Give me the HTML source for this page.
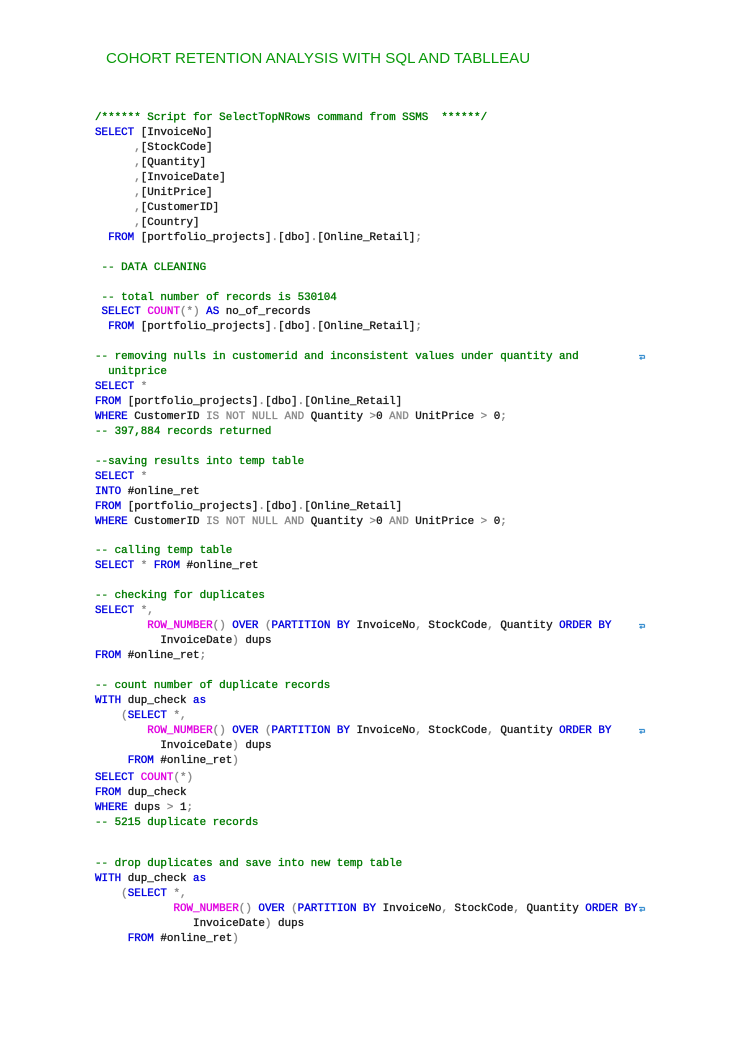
<!DOCTYPE html>
<html><head><meta charset="utf-8">
<style>
html,body{margin:0;padding:0;background:#fff;width:740px;height:1047px;overflow:hidden;position:relative}
.t{position:absolute;left:106px;top:50px;font-family:"Liberation Sans",Arial,sans-serif;font-size:15.1px;color:#0a9a0a;white-space:pre;letter-spacing:0}
#code{position:absolute;left:0;top:1px;width:740px;height:1000px}
.l{position:absolute;left:95px;height:15px;line-height:15px;font-family:"Liberation Mono","DejaVu Sans Mono",monospace;font-size:10.9px;color:#1a1a1a;white-space:pre;-webkit-text-stroke:0.35px}
.k{color:#0000e0}.c{color:#007a00}.g{color:#8a8a8a}.m{color:#e000e0}
.w{position:absolute;width:8px;height:7px}
</style></head><body>
<div class="t">COHORT RETENTION ANALYSIS WITH SQL AND TABLLEAU</div>
<div id="code">
<div class="l" style="top:110px"><span class="c">/****** Script for SelectTopNRows command from SSMS  ******/</span></div>
<div class="l" style="top:125px"><span class="k">SELECT</span> [InvoiceNo]</div>
<div class="l" style="top:140px">      <span class="g">,</span>[StockCode]</div>
<div class="l" style="top:155px">      <span class="g">,</span>[Quantity]</div>
<div class="l" style="top:170px">      <span class="g">,</span>[InvoiceDate]</div>
<div class="l" style="top:185px">      <span class="g">,</span>[UnitPrice]</div>
<div class="l" style="top:200px">      <span class="g">,</span>[CustomerID]</div>
<div class="l" style="top:215px">      <span class="g">,</span>[Country]</div>
<div class="l" style="top:230px">  <span class="k">FROM</span> [portfolio_projects]<span class="g">.</span>[dbo]<span class="g">.</span>[Online_Retail]<span class="g">;</span></div>

<div class="l" style="top:260px"> <span class="c">-- DATA CLEANING</span></div>

<div class="l" style="top:290px"> <span class="c">-- total number of records is 530104</span></div>
<div class="l" style="top:304px"> <span class="k">SELECT</span> <span class="m">COUNT</span><span class="g">(*)</span> <span class="k">AS</span> no_of_records</div>
<div class="l" style="top:319px">  <span class="k">FROM</span> [portfolio_projects]<span class="g">.</span>[dbo]<span class="g">.</span>[Online_Retail]<span class="g">;</span></div>

<div class="l" style="top:349px"><span class="c">-- removing nulls in customerid and inconsistent values under quantity and</span></div>
<div class="l" style="top:364px"><span class="c">  unitprice</span></div>
<div class="l" style="top:379px"><span class="k">SELECT</span> <span class="g">*</span></div>
<div class="l" style="top:394px"><span class="k">FROM</span> [portfolio_projects]<span class="g">.</span>[dbo]<span class="g">.</span>[Online_Retail]</div>
<div class="l" style="top:409px"><span class="k">WHERE</span> CustomerID <span class="g">IS NOT NULL AND</span> Quantity <span class="g">&gt;</span>0 <span class="g">AND</span> UnitPrice <span class="g">&gt;</span> 0<span class="g">;</span></div>
<div class="l" style="top:424px"><span class="c">-- 397,884 records returned</span></div>

<div class="l" style="top:454px"><span class="c">--saving results into temp table</span></div>
<div class="l" style="top:469px"><span class="k">SELECT</span> <span class="g">*</span></div>
<div class="l" style="top:484px"><span class="k">INTO</span> #online_ret</div>
<div class="l" style="top:499px"><span class="k">FROM</span> [portfolio_projects]<span class="g">.</span>[dbo]<span class="g">.</span>[Online_Retail]</div>
<div class="l" style="top:514px"><span class="k">WHERE</span> CustomerID <span class="g">IS NOT NULL AND</span> Quantity <span class="g">&gt;</span>0 <span class="g">AND</span> UnitPrice <span class="g">&gt;</span> 0<span class="g">;</span></div>

<div class="l" style="top:543px"><span class="c">-- calling temp table</span></div>
<div class="l" style="top:558px"><span class="k">SELECT</span> <span class="g">*</span> <span class="k">FROM</span> #online_ret</div>

<div class="l" style="top:588px"><span class="c">-- checking for duplicates</span></div>
<div class="l" style="top:603px"><span class="k">SELECT</span> <span class="g">*,</span></div>
<div class="l" style="top:618px">        <span class="m">ROW_NUMBER</span><span class="g">()</span> <span class="k">OVER</span> <span class="g">(</span><span class="k">PARTITION BY</span> InvoiceNo<span class="g">,</span> StockCode<span class="g">,</span> Quantity <span class="k">ORDER BY</span></div>
<div class="l" style="top:633px">          InvoiceDate<span class="g">)</span> dups</div>
<div class="l" style="top:648px"><span class="k">FROM</span> #online_ret<span class="g">;</span></div>

<div class="l" style="top:678px"><span class="c">-- count number of duplicate records</span></div>
<div class="l" style="top:693px"><span class="k">WITH</span> dup_check <span class="k">as</span></div>
<div class="l" style="top:708px">    <span class="g">(</span><span class="k">SELECT</span> <span class="g">*,</span></div>
<div class="l" style="top:723px">        <span class="m">ROW_NUMBER</span><span class="g">()</span> <span class="k">OVER</span> <span class="g">(</span><span class="k">PARTITION BY</span> InvoiceNo<span class="g">,</span> StockCode<span class="g">,</span> Quantity <span class="k">ORDER BY</span></div>
<div class="l" style="top:738px">          InvoiceDate<span class="g">)</span> dups</div>
<div class="l" style="top:753px">     <span class="k">FROM</span> #online_ret<span class="g">)</span></div>
<div class="l" style="top:770px"><span class="k">SELECT</span> <span class="m">COUNT</span><span class="g">(*)</span></div>
<div class="l" style="top:785px"><span class="k">FROM</span> dup_check</div>
<div class="l" style="top:800px"><span class="k">WHERE</span> dups <span class="g">&gt;</span> 1<span class="g">;</span></div>
<div class="l" style="top:815px"><span class="c">-- 5215 duplicate records</span></div>

<div class="l" style="top:856px"><span class="c">-- drop duplicates and save into new temp table</span></div>
<div class="l" style="top:871px"><span class="k">WITH</span> dup_check <span class="k">as</span></div>
<div class="l" style="top:886px">    <span class="g">(</span><span class="k">SELECT</span> <span class="g">*,</span></div>
<div class="l" style="top:901px">            <span class="m">ROW_NUMBER</span><span class="g">()</span> <span class="k">OVER</span> <span class="g">(</span><span class="k">PARTITION BY</span> InvoiceNo<span class="g">,</span> StockCode<span class="g">,</span> Quantity <span class="k">ORDER BY</span></div>
<div class="l" style="top:916px">               InvoiceDate<span class="g">)</span> dups</div>
<div class="l" style="top:931px">     <span class="k">FROM</span> #online_ret<span class="g">)</span></div>

<svg class="w" style="left:638px;top:353px" viewBox="0 0 8 7"><path d="M1 1.5H6.5M6.5 1.5V4.2H2M3.5 2.8L2 4.2 3.5 5.6" stroke="#3a8fd0" stroke-width="1.2" fill="none"/></svg>
<svg class="w" style="left:638px;top:622px" viewBox="0 0 8 7"><path d="M1 1.5H6.5M6.5 1.5V4.2H2M3.5 2.8L2 4.2 3.5 5.6" stroke="#3a8fd0" stroke-width="1.2" fill="none"/></svg>
<svg class="w" style="left:638px;top:727px" viewBox="0 0 8 7"><path d="M1 1.5H6.5M6.5 1.5V4.2H2M3.5 2.8L2 4.2 3.5 5.6" stroke="#3a8fd0" stroke-width="1.2" fill="none"/></svg>
<svg class="w" style="left:638px;top:905px" viewBox="0 0 8 7"><path d="M1 1.5H6.5M6.5 1.5V4.2H2M3.5 2.8L2 4.2 3.5 5.6" stroke="#3a8fd0" stroke-width="1.2" fill="none"/></svg>
</div>
</body></html>
